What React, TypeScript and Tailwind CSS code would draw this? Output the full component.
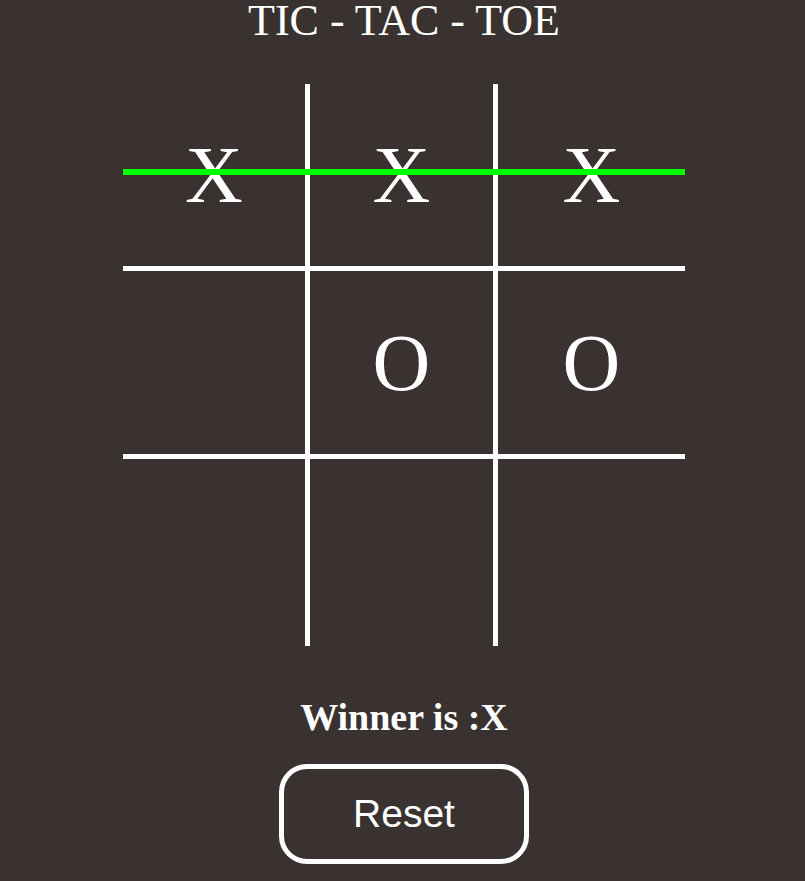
import { useState } from 'react';

type Mark = 'X' | 'O' | '';

const START: Mark[] = ['X', 'X', 'X', '', 'O', 'O', '', '', ''];

// inner lines only: each cell owns its right / bottom edge
const CELL_CLASS = [
  'w-[187px] h-[187px] border-r-[5px] border-b-[5px]',
  'w-[188px] h-[187px] border-r-[5px] border-b-[5px]',
  'w-[187px] h-[187px] border-b-[5px]',
  'w-[187px] h-[188px] border-r-[5px] border-b-[5px]',
  'w-[188px] h-[188px] border-r-[5px] border-b-[5px]',
  'w-[187px] h-[188px] border-b-[5px]',
  'w-[187px] h-[187px] border-r-[5px]',
  'w-[188px] h-[187px] border-r-[5px]',
  'w-[187px] h-[187px]',
];

export default function App() {
  const [board, setBoard] = useState<Mark[]>(START);
  const winner = 'X';

  return (
    <div className="min-h-[881px] bg-[#393231] pl-[3px] flex flex-col items-center text-white">
      <h1 className="text-[44px] leading-[42px] font-['Liberation_Serif',serif]">TIC - TAC - TOE</h1>

      <div className="relative mt-[42px] grid grid-cols-[187px_188px_187px]">
        {board.map((mark, i) => (
          <div
            key={i}
            className={`${CELL_CLASS[i]} box-border border-white flex items-center justify-center text-[80px] leading-none font-['Liberation_Serif',serif]`}
          >
            {mark}
          </div>
        ))}
        {/* winning strike */}
        <div className="absolute left-0 right-0 top-[85px] h-[6px] bg-[#00ff00]" />
      </div>

      <h2 className="mt-[50px] text-[38px] font-bold leading-[42px] font-['Liberation_Serif',serif]">
        Winner is :{winner}
      </h2>

      <button
        onClick={() => setBoard(Array(9).fill(''))}
        className="mt-[26px] w-[250px] h-[100px] rounded-[28px] border-[5px] border-white bg-transparent text-[39px] text-white font-['Liberation_Sans',Arial,sans-serif]"
      >
        Reset
      </button>
    </div>
  );
}
